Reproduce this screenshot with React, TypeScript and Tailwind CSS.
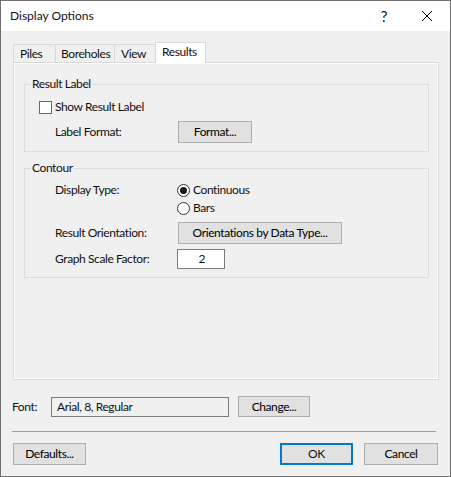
import React from "react";

const font = { fontFamily: 'Lato, "Noto Sans", Arial, sans-serif' };

function Btn({ children, className = "" }: { children: React.ReactNode; className?: string }) {
  return (
    <div
      className={`flex items-center justify-center bg-[#e1e1e1] border border-[#adadad] text-black ${className}`}
    >
      {children}
    </div>
  );
}

function Radio({ checked }: { checked?: boolean }) {
  return (
    <div className="w-[13px] h-[13px] rounded-full border border-[#333333] bg-white flex items-center justify-center shrink-0">
      {checked && <div className="w-[7px] h-[7px] rounded-full bg-[#1a1a1a]" />}
    </div>
  );
}

export default function App() {
  return (
    <div
      className="w-[451px] h-[477px] border border-[#707070] bg-[#f0f0f0] flex flex-col text-[12px] leading-[16px] tracking-[-0.4px] text-[#111111]"
      style={font}
    >
      {/* Title bar */}
      <div className="h-[30px] bg-white flex items-center shrink-0">
        <div className="ml-[9px] text-[12px] tracking-normal">Display Options</div>
        <div className="ml-auto w-[10px] text-[15px] leading-[16px] mr-[32px] text-center">?</div>
        <svg width="12" height="12" viewBox="0 0 12 12" className="mr-[17px]">
          <path d="M1 1 L11 11 M11 1 L1 11" stroke="#000" strokeWidth="1" />
        </svg>
      </div>

      {/* Tabs */}
      <div className="mt-[11px] ml-[12px] flex items-end h-[20px]">
        <div className="w-[43px] h-[18px] border border-b-0 border-[#d9d9d9] bg-[#f0f0f0] pl-[6px] flex items-center">
          Piles
        </div>
        <div className="-ml-px w-[60px] h-[18px] border border-b-0 border-[#d9d9d9] bg-[#f0f0f0] pl-[5px] flex items-center">
          Boreholes
        </div>
        <div className="-ml-px w-[42px] h-[18px] border border-b-0 border-[#d9d9d9] bg-[#f0f0f0] pl-[6px] flex items-center">
          View
        </div>
        <div className="-ml-px w-[51px] h-[21px] mb-[-1px] relative z-10 border border-b-0 border-[#d9d9d9] bg-white pl-[6px] flex items-center pb-[3px]">
          Results
        </div>
      </div>

      {/* Panel */}
      <div className="ml-[12px] w-[426px] h-[318px] border border-[#d9d9d9] shrink-0">
        <div className="w-full h-full border border-white px-[9px] pt-[12px]">
          {/* Result Label group */}
          <fieldset className="border border-[#dcdcdc] w-[405px] pb-[8px]">
            <legend className="ml-[6px] px-[1px] leading-[16px]">Result Label</legend>
            <div className="mt-[7px] h-[16px] flex items-center pl-[14px]">
              <div className="w-[13px] h-[13px] border border-[#2b74cf] bg-white shrink-0" />
              <span className="ml-[3px]">Show Result Label</span>
            </div>
            <div className="mt-[6px] flex items-center pl-[30px]">
              <span className="w-[123px]">Label Format:</span>
              <Btn className="w-[74px] h-[22px]">Format...</Btn>
            </div>
          </fieldset>

          {/* Contour group */}
          <fieldset className="mt-[8px] border border-[#dcdcdc] w-[405px] pb-[8px]">
            <legend className="ml-[6px] px-[1px] leading-[16px]">Contour</legend>
            <div className="mt-[6px] flex pl-[30px]">
              <span className="w-[122px] h-[16px] flex items-center">Display Type:</span>
              <div className="flex flex-col gap-[2px]">
                <div className="h-[16px] flex items-center">
                  <Radio checked />
                  <span className="ml-[3px]">Continuous</span>
                </div>
                <div className="h-[16px] flex items-center">
                  <Radio />
                  <span className="ml-[3px]">Bars</span>
                </div>
              </div>
            </div>
            <div className="mt-[6px] flex items-center pl-[30px]">
              <span className="w-[123px]">Result Orientation:</span>
              <Btn className="w-[164px] h-[22px]">Orientations by Data Type...</Btn>
            </div>
            <div className="mt-[5px] flex items-center pl-[30px]">
              <span className="w-[122px]">Graph Scale Factor:</span>
              <div className="w-[48px] h-[20px] border border-[#7a7a7a] bg-white flex items-center justify-end pr-[19px]">
                2
              </div>
            </div>
          </fieldset>
        </div>
      </div>

      {/* Font row */}
      <div className="mt-[16px] ml-[11px] flex items-center h-[21px]">
        <span className="w-[39px]">Font:</span>
        <div className="w-[178px] h-[20px] border border-[#7a7a7a] bg-[#f0f0f0] flex items-center pl-[5px]">
          Arial, 8, Regular
        </div>
        <Btn className="ml-[9px] w-[72px] h-[21px]">Change...</Btn>
      </div>

      {/* Separator */}
      <div className="mt-[14px] ml-[11px] w-[424px] border-t border-[#a0a0a0]" />

      {/* Bottom buttons */}
      <div className="mt-[11px] ml-[12px] flex h-[22px]">
        <Btn className="w-[73px] h-[22px]">Defaults...</Btn>
        <div className="ml-auto w-[73px] h-[22px] flex items-center justify-center bg-[#e1e1e1] border-2 border-[#0078d7]">
          OK
        </div>
        <Btn className="ml-[11px] mr-[12px] w-[74px] h-[22px]">Cancel</Btn>
      </div>
    </div>
  );
}
